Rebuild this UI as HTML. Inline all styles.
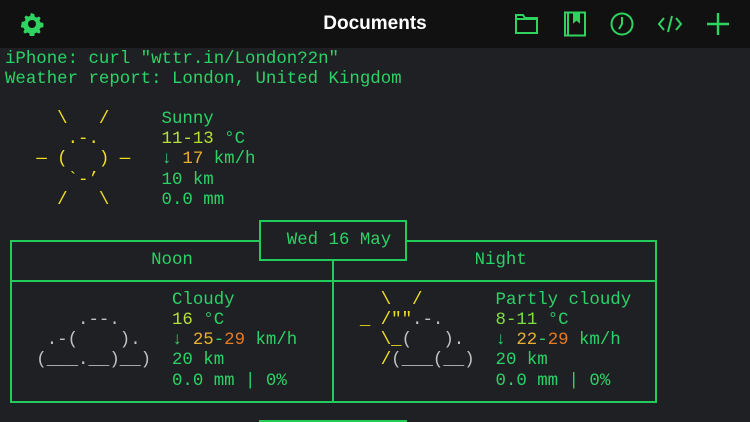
<!DOCTYPE html>
<html><head><meta charset="utf-8"><style>
html,body{margin:0;padding:0}
body{width:750px;height:422px;background:#1f2023;position:relative;overflow:hidden;font-family:"Liberation Mono","DejaVu Sans Mono",monospace}
.hdr{position:absolute;left:0;top:0;width:750px;height:48px;background:#111112}
.title{position:absolute;left:0;width:750px;top:13px;text-align:center;color:#fff;font-family:"Liberation Sans",sans-serif;font-weight:bold;font-size:19px}
pre{position:absolute;left:5px;top:50px;margin:0;font-family:"Liberation Mono",monospace;font-size:17.4px;line-height:20.1px;color:#2bd267}
.y{color:#f0e024}.g{color:#c2c2c2}.lg{color:#b4e03a}.lg2{color:#7ee03c}.o1{color:#e8b030}.o2{color:#e87a22}
.c{display:inline-block;width:1ch;text-align:center}
.l{position:absolute;background:#22cc5a}
svg{position:absolute}
</style></head><body>
<div class="hdr"></div>
<div class="title">Documents</div>
<svg style="left:20px;top:12px" width="24" height="24" viewBox="0 0 24 24"><path d="M12 1.5l2.2.4.5 2.7 1.8 1 2.5-1.1 1.6 1.6-1.1 2.5 1 1.8 2.7.5.3 2.1-.3 2.2-2.7.5-1 1.8 1.1 2.5-1.6 1.6-2.5-1.1-1.8 1-.5 2.7-2.2.3-2.2-.3-.5-2.7-1.8-1-2.5 1.1-1.6-1.6 1.1-2.5-1-1.8-2.7-.5L1.5 12l.3-2.1 2.7-.5 1-1.8-1.1-2.5 1.6-1.6 2.5 1.1 1.8-1 .5-2.7z" fill="#2fd35f"/><circle cx="12" cy="12" r="4" fill="#111112"/></svg>
<svg style="left:514px;top:12px" width="26" height="24" viewBox="0 0 26 24" fill="none" stroke="#2fd35f" stroke-width="2"><path d="M2 3h7l2 3h12v15H2z M2 7h21"/></svg>
<svg style="left:563px;top:11px" width="24" height="26" viewBox="0 0 24 26" fill="none" stroke="#2fd35f" stroke-width="2"><rect x="2" y="1.5" width="20" height="23"/><path d="M5 1.5v23"/><path d="M11 1.5v9l2.5-2 2.5 2v-9" fill="#2fd35f"/></svg>
<svg style="left:610px;top:12px" width="24" height="24" viewBox="0 0 24 24" fill="none" stroke="#2fd35f" stroke-width="2"><circle cx="12" cy="12" r="10.5"/><path d="M12 5v7l-3 5"/></svg>
<svg style="left:657px;top:14px" width="26" height="20" viewBox="0 0 26 20" fill="none" stroke="#2fd35f" stroke-width="2"><path d="M7 4l-5 6 5 6M19 4l5 6-5 6M15 2l-4 16"/></svg>
<svg style="left:706px;top:12px" width="24" height="24" viewBox="0 0 24 24" fill="none" stroke="#2fd35f" stroke-width="2.4"><path d="M12 1v22M1 12h22"/></svg>

<div class="l" style="left:10px;top:240px;width:647px;height:2px"></div>
<div class="l" style="left:10px;top:240px;width:2px;height:163px"></div>
<div class="l" style="left:655px;top:240px;width:2px;height:163px"></div>
<div class="l" style="left:10px;top:401px;width:647px;height:2px"></div>
<div class="l" style="left:10px;top:280px;width:647px;height:2px"></div>
<div class="l" style="left:332px;top:260px;width:2px;height:143px"></div>
<div class="l" style="left:259px;top:220px;width:148px;height:41px;background:#1f2023;border:2px solid #22cc5a;box-sizing:border-box"></div>
<div class="l" style="left:259px;top:420px;width:148px;height:2px"></div>

<pre>iPhone: curl "wttr.in/London?2n"
Weather report: London, United Kingdom

<span class="y">     \   /     </span>Sunny
<span class="y">      .-.      </span><span class="lg">11-13</span> °C
<span class="y">   <span class="c">―</span> (   ) <span class="c">―</span>   </span><span class="c">↓</span> <span class="o1">17</span> km/h
<span class="y">      `-<span class="c">’</span>      </span>10 km
<span class="y">     /   \     </span>0.0 mm

                           Wed 16 May
              Noon                           Night

                Cloudy              <span class="y">\  /</span>       Partly cloudy
<span class="g">       .--.     </span><span class="lg">16</span> °C             <span class="y">_ /""</span><span class="g">.-.</span>     <span class="lg2">8-11</span> °C
<span class="g">    .-(    ).   </span><span class="c">↓</span> <span class="o1">25</span>-<span class="o2">29</span> km/h        <span class="y">\_</span><span class="g">(   ).</span>   <span class="c">↓</span> <span class="o1">22</span>-<span class="o2">29</span> km/h
<span class="g">   (___.__)__)  </span>20 km               <span class="y">/</span><span class="g">(___(__)</span>  20 km
                0.0 mm | 0%                    0.0 mm | 0%</pre>
</body></html>
